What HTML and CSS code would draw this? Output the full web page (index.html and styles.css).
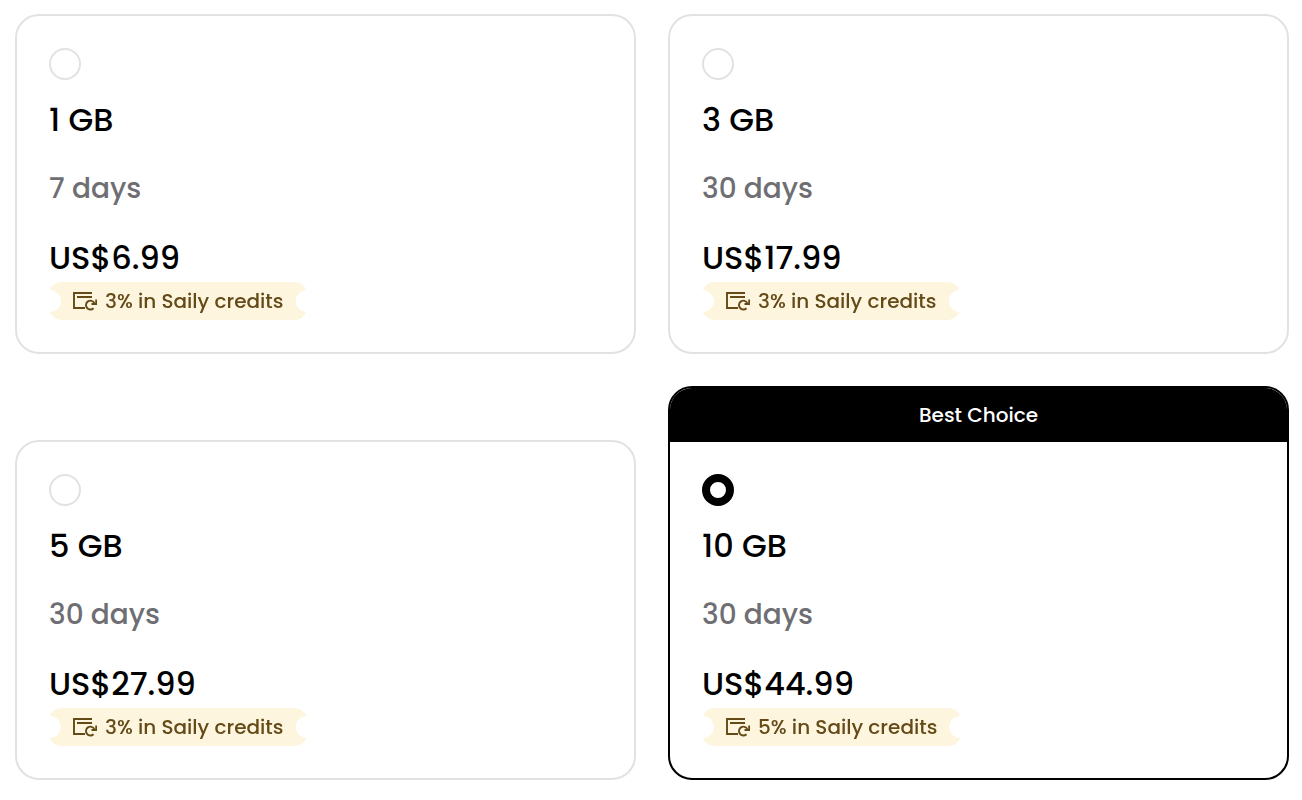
FILE: index.html
```html
<!DOCTYPE html>
<html lang="en">
<head>
    <meta charset="UTF-8">
    <meta name="viewport" content="width=device-width, initial-scale=1.0">
    <title>Choose your plan</title>
    <link rel="stylesheet" href="styles.css">
</head>
<body>
    <svg width="0" height="0" class="sprite" aria-hidden="true">
        <symbol id="credits" viewBox="0 0 24 24">
            <path d="M19 4H1v15h11M4 8h15" fill="none" stroke="currentColor" stroke-width="1.900"/>
            <path d="M20.500 19.200a4.400 4.400 0 1 1 .8-5.200M23.200 10.500v4.500h-4.700" fill="none" stroke="currentColor" stroke-width="1.900"/>
        </symbol>
    </svg>

    <form class="plans">
        <label class="plan">
            <span class="plan-body">
                <input type="radio" name="plan" value="1">
                <span class="plan-data">1 GB</span>
                <span class="plan-days">7 days</span>
                <span class="plan-price">US$6.99</span>
                <span class="credits"><svg class="credits-icon"><use href="#credits"/></svg>3% in Saily credits</span>
            </span>
        </label>
        <label class="plan">
            <span class="plan-body">
                <input type="radio" name="plan" value="3">
                <span class="plan-data">3 GB</span>
                <span class="plan-days">30 days</span>
                <span class="plan-price">US$17.99</span>
                <span class="credits"><svg class="credits-icon"><use href="#credits"/></svg>3% in Saily credits</span>
            </span>
        </label>
        <label class="plan">
            <span class="plan-body">
                <input type="radio" name="plan" value="5">
                <span class="plan-data">5 GB</span>
                <span class="plan-days">30 days</span>
                <span class="plan-price">US$27.99</span>
                <span class="credits"><svg class="credits-icon"><use href="#credits"/></svg>3% in Saily credits</span>
            </span>
        </label>
        <label class="plan selected">
            <span class="plan-banner">Best Choice</span>
            <span class="plan-body">
                <input type="radio" name="plan" value="10" checked>
                <span class="plan-data">10 GB</span>
                <span class="plan-days">30 days</span>
                <span class="plan-price">US$44.99</span>
                <span class="credits"><svg class="credits-icon"><use href="#credits"/></svg>5% in Saily credits</span>
            </span>
        </label>
    </form>
</body>
</html>
```

FILE: styles.css
```css
* {
    box-sizing: border-box;
}

body {
    font-family: Poppins, Inter, sans-serif;
    font-weight: 500;
    color: #000;
    background-color: #fff;
    margin: 0;
    padding: 14px 13px 20px 15px;
}

.sprite {
    display: none;
}

.plans {
    display: grid;
    grid-template-columns: 1fr 1fr;
    gap: 32px;
    align-items: end;
}

.plan {
    display: block;
    border: 2px solid #e2e2e2;
    border-radius: 24px;
    overflow: hidden;
    cursor: pointer;
}

.plan.selected {
    border-color: #000;
}

.plan-banner {
    display: block;
    background-color: #000;
    color: #fff;
    font-size: 20px;
    line-height: 54px;
    text-align: center;
}

.plan-body {
    display: flex;
    flex-direction: column;
    align-items: flex-start;
    padding: 32px;
}

input[type="radio"] {
    appearance: none;
    width: 32px;
    height: 32px;
    margin: 0 0 16px;
    border: 2px solid #e2e2e2;
    border-radius: 50%;
    cursor: pointer;
}

input[type="radio"]:checked {
    border: 8px solid #000;
}

.plan-data,
.plan-price {
    font-size: 32px;
    line-height: 48px;
}

.plan-days {
    margin: 24px 0;
    font-size: 28px;
    line-height: 42px;
    color: #6e6e73;
}

/* ticket shape with a notch on each side */
.credits {
    display: flex;
    align-items: center;
    gap: 8px;
    height: 38px;
    padding: 0 24px;
    border-radius: 12px;
    background-color: #fef5df;
    color: #634a17;
    font-size: 20px;
    -webkit-mask: radial-gradient(circle 11px at 1px 50%, transparent 96%, #000) left / 51% 100% no-repeat,
                  radial-gradient(circle 11px at calc(100% - 1px) 50%, transparent 96%, #000) right / 51% 100% no-repeat;
    mask: radial-gradient(circle 11px at 1px 50%, transparent 96%, #000) left / 51% 100% no-repeat,
          radial-gradient(circle 11px at calc(100% - 1px) 50%, transparent 96%, #000) right / 51% 100% no-repeat;
}

.credits-icon {
    width: 24px;
    height: 24px;
}
```
